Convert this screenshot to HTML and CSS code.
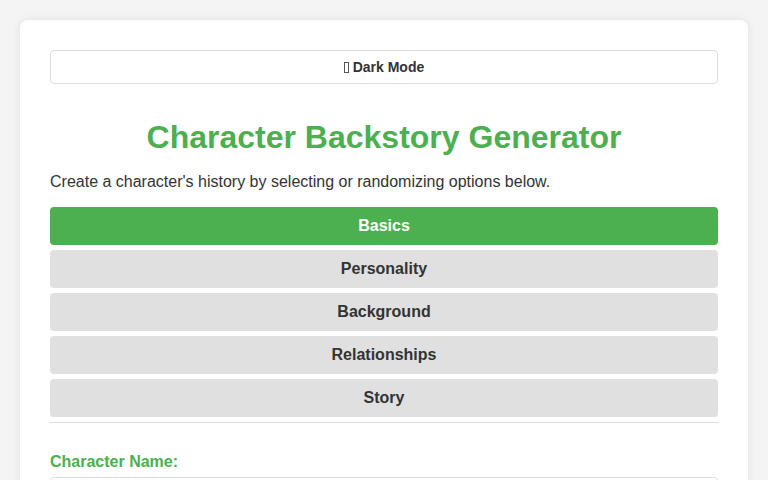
FILE: index.html
```html
<!DOCTYPE html>
<html lang="en">
<head>
<meta charset="utf-8">
<title>Character Backstory Generator</title>
<link rel="stylesheet" href="styles.css">
</head>
<body>
<div class="container">
  <button class="theme-toggle"><span class="tofu"></span> Dark Mode</button>
  <h1>Character Backstory Generator</h1>
  <p class="intro">Create a character's history by selecting or randomizing options below.</p>
  <div class="tabs">
    <button class="tab active">Basics</button>
    <button class="tab">Personality</button>
    <button class="tab">Background</button>
    <button class="tab">Relationships</button>
    <button class="tab">Story</button>
  </div>
  <div class="form-group">
    <label class="label">Character Name:</label>
    <input class="text-input" type="text">
  </div>
</div>
</body>
</html>
```
FILE: styles.css
```css
html, body {
  margin: 0;
  padding: 0;
}
body {
  background: #f4f4f4;
  font-family: "Liberation Sans", Arial, sans-serif;
  color: #333;
  padding: 20px;
}
.container {
  background: #fff;
  border-radius: 8px;
  box-shadow: 0 0 10px rgba(0,0,0,0.08);
  padding: 30px;
}
.theme-toggle {
  display: block;
  width: 100%;
  height: 34px;
  background: #fff;
  border: 1px solid #ddd;
  border-radius: 4px;
  font-family: "Liberation Sans", Arial, sans-serif;
  font-weight: bold;
  font-size: 14px;
  color: #333;
  margin: 0 0 35px 0;
  padding: 0;
}
.tofu {
  display: inline-block;
  width: 3px;
  height: 9px;
  border: 1px solid #555;
  vertical-align: -1px;
}
h1 {
  color: #4caf50;
  text-align: center;
  font-size: 32px;
  margin: 0 0 17px 0;
  line-height: 37px;
}
.intro {
  font-size: 16px;
  margin: 0 0 16px 0;
  line-height: 18px;
}
.tabs {
  display: flex;
  flex-direction: column;
  gap: 5px;
  padding-bottom: 5px;
  border-bottom: 1px solid #ddd;
  margin-bottom: 30px;
}
.tab {
  display: block;
  width: 100%;
  height: 38px;
  border: none;
  border-radius: 4px;
  background: #e0e0e0;
  color: #333;
  font-family: "Liberation Sans", Arial, sans-serif;
  font-weight: bold;
  font-size: 16px;
  padding: 0;
}
.tab.active {
  background: #4caf50;
  color: #fff;
}
.label {
  display: block;
  color: #4caf50;
  font-weight: bold;
  font-size: 16px;
  line-height: 18px;
  margin-bottom: 6px;
}
.text-input {
  display: block;
  width: 100%;
  box-sizing: border-box;
  height: 38px;
  border: 1px solid #ddd;
  border-radius: 4px;
}
```
